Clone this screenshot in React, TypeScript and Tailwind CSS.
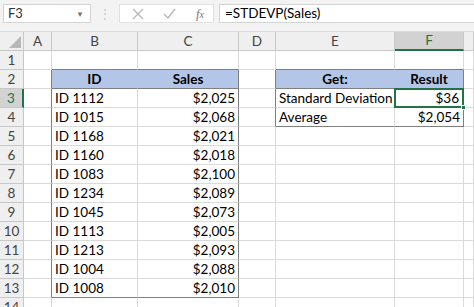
import React from "react";

const font = { fontFamily: "Lato, 'Liberation Sans', sans-serif" };

const sales: [string, string][] = [
  ["ID 1112", "$2,025"],
  ["ID 1015", "$2,068"],
  ["ID 1168", "$2,021"],
  ["ID 1160", "$2,018"],
  ["ID 1083", "$2,100"],
  ["ID 1234", "$2,089"],
  ["ID 1045", "$2,073"],
  ["ID 1113", "$2,005"],
  ["ID 1213", "$2,093"],
  ["ID 1004", "$2,088"],
  ["ID 1008", "$2,010"],
];

const cols = ["A", "B", "C", "D", "E", "F", ""];
const DARK = "border-[#7f7f7f]";
const GRID = "border-[#dadada]";

function Cell({
  children,
  className = "",
}: {
  children?: React.ReactNode;
  className?: string;
}) {
  return (
    <div className={`h-[19px] border-r border-b flex items-center px-[3px] text-[13.5px] text-black whitespace-nowrap overflow-visible ${className}`}>
      {children}
    </div>
  );
}

export default function App() {
  const rows = Array.from({ length: 14 }, (_, i) => i + 1);

  return (
    <div className="w-[474px] h-[307px] overflow-hidden bg-white select-none" style={font}>
      {/* Formula bar */}
      <div className="h-[31px] bg-[#f3f3f3] flex items-start pt-[4px] pl-[3px]">
        <div className="w-[88px] h-[19px] bg-white border border-[#d4d4d4] flex items-center justify-between pl-[4px] pr-[6px] text-[13px] text-[#333]">
          <span>F3</span>
          <span className="text-[8px] text-[#777]">▼</span>
        </div>
        <div className="w-[28px] h-[19px] flex items-center justify-center text-[#c4c4c4] text-[12px]">⋮</div>
        <div className="w-[95px] h-[19px] bg-white border border-[#e0e0e0] flex items-center justify-between pl-[12px] pr-[9px]">
          <svg width="12" height="12" viewBox="0 0 12 12" fill="none" stroke="#b5b5b5" strokeWidth="1.2">
            <path d="M1 1L11 11M11 1L1 11" />
          </svg>
          <svg width="13" height="11" viewBox="0 0 13 11" fill="none" stroke="#b5b5b5" strokeWidth="1.3">
            <path d="M1 6L5 10L12 1" />
          </svg>
          <span className="text-[13px] italic text-[#777]" style={{ fontFamily: "'Liberation Serif', serif" }}>
            f<span className="text-[10px]">x</span>
          </span>
        </div>
        <div className="ml-[5px] flex-1 h-[19px] bg-white border-l border-y border-[#d4d4d4] flex items-center pl-[5px] text-[13.5px] text-black">
          =STDEVP(Sales)
        </div>
      </div>

      {/* Sheet grid */}
      <div className="grid grid-cols-[24px_28px_86px_101px_37px_119px_69px_1fr] border-t border-[#dcdcdc]">
        {/* column header row */}
        <div className="h-[19px] bg-[#efefef] border-r border-b border-[#c8c8c8] flex items-end justify-end pr-[2px] pb-[2px]">
          <svg width="12" height="12" viewBox="0 0 12 12">
            <path d="M12 0L12 12L0 12Z" fill="#b8b8b8" />
          </svg>
        </div>
        {cols.map((c, i) =>
          c === "F" ? (
            <div
              key={c}
              className="h-[19px] bg-[#d2d2d2] border-r border-[#c8c8c8] border-b-2 border-b-[#217346] flex items-center justify-center text-[13.5px] text-[#217346]"
            >
              {c}
            </div>
          ) : (
            <div
              key={c + i}
              className="h-[19px] bg-[#efefef] border-r border-b border-[#c8c8c8] flex items-center justify-center text-[13.5px] text-[#444]"
            >
              {c}
            </div>
          )
        )}

        {rows.map((r) => {
          const rowHead =
            r === 3 ? (
              <div key={`h${r}`} className="h-[19px] bg-[#d2d2d2] border-b border-[#c8c8c8] border-r-2 border-r-[#217346] flex items-center justify-center text-[13.5px] text-[#217346]">
                {r}
              </div>
            ) : (
              <div key={`h${r}`} className="h-[19px] bg-[#efefef] border-r border-b border-[#c8c8c8] flex items-center justify-center text-[13.5px] text-[#444]">
                {r}
              </div>
            );

          const inLeft = r >= 2 && r <= 13;
          const inRight = r >= 2 && r <= 4;
          const data = r >= 3 && r <= 13 ? sales[r - 3] : null;

          // column A
          const a = <Cell key={`a${r}`} className={`${GRID} ${inLeft ? "border-r-[#7f7f7f]" : ""}`} />;

          // column B / C
          const bBottom = r === 1 || r === 2 || r === 13 ? "border-b-[#7f7f7f]" : "";
          const headBlue = r === 2 ? "bg-[#b4c6e7] font-bold justify-center" : "";
          const b = (
            <Cell key={`b${r}`} className={`${GRID} ${bBottom} ${headBlue} ${r === 2 ? "border-r-[#b4c6e7]" : ""}`}>
              {r === 2 ? "ID" : data ? data[0] : null}
            </Cell>
          );
          const c = (
            <Cell
              key={`c${r}`}
              className={`${GRID} ${bBottom} ${headBlue} ${inLeft ? "border-r-[#7f7f7f]" : ""} ${r >= 3 ? "justify-end" : ""}`}
            >
              {r === 2 ? "Sales" : data ? data[1] : null}
            </Cell>
          );

          const d = <Cell key={`d${r}`} className={`${GRID} ${inRight ? "border-r-[#7f7f7f]" : ""}`} />;

          const eBottom = r === 1 || r === 2 || r === 4 ? "border-b-[#7f7f7f]" : "";
          const e = (
            <Cell key={`e${r}`} className={`${GRID} ${eBottom} ${r === 2 ? "bg-[#b4c6e7] font-bold justify-center border-r-[#b4c6e7]" : ""}`}>
              {r === 2 ? "Get:" : r === 3 ? "Standard Deviation" : r === 4 ? "Average" : null}
            </Cell>
          );

          const f =
            r === 3 ? (
              <Cell key={`f${r}`} className={`${GRID} border-r-[#7f7f7f] justify-end relative`}>
                <div className="absolute left-[-1px] top-[-1px] right-[-1px] bottom-[-1px] border-2 border-[#217346]" />
                <div className="absolute right-[-3px] bottom-[-3px] w-[5px] h-[5px] bg-[#217346] border border-white" />
                <span className="relative pr-[1px]">$36</span>
              </Cell>
            ) : (
              <Cell
                key={`f${r}`}
                className={`${GRID} ${eBottom} ${inRight ? "border-r-[#7f7f7f]" : ""} ${r === 2 ? "bg-[#b4c6e7] font-bold justify-center" : "justify-end"}`}
              >
                {r === 2 ? "Result" : r === 4 ? "$2,054" : null}
              </Cell>
            );

          const g = <Cell key={`g${r}`} className={GRID} />;

          return (
            <React.Fragment key={r}>
              {rowHead}
              {a}
              {b}
              {c}
              {d}
              {e}
              {f}
              {g}
            </React.Fragment>
          );
        })}
      </div>
    </div>
  );
}
